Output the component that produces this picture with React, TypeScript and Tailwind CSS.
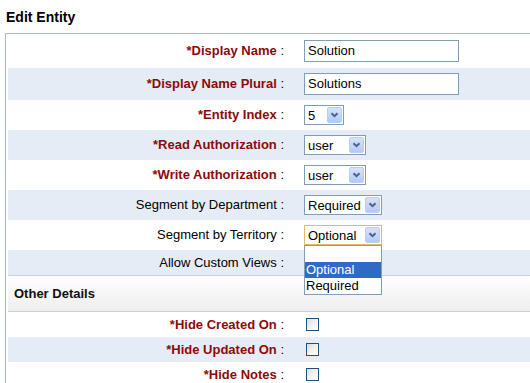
import React from 'react';

type Field =
  | { kind: 'text'; value: string }
  | { kind: 'select'; value: string; width: string; focused?: boolean; open?: boolean }
  | { kind: 'check' }
  | { kind: 'none' };

interface Row {
  label: string;
  required: boolean;
  height: string;
  field: Field;
}

const topRows: Row[] = [
  { label: 'Display Name', required: true, height: 'h-[34px]', field: { kind: 'text', value: 'Solution' } },
  { label: 'Display Name Plural', required: true, height: 'h-[32px]', field: { kind: 'text', value: 'Solutions' } },
  { label: 'Entity Index', required: true, height: 'h-[30px]', field: { kind: 'select', value: '5', width: 'w-[40px]' } },
  { label: 'Read Authorization', required: true, height: 'h-[30px]', field: { kind: 'select', value: 'user', width: 'w-[62px]' } },
  { label: 'Write Authorization', required: true, height: 'h-[30px]', field: { kind: 'select', value: 'user', width: 'w-[62px]' } },
  { label: 'Segment by Department', required: false, height: 'h-[30px]', field: { kind: 'select', value: 'Required', width: 'w-[78px]' } },
  {
    label: 'Segment by Territory',
    required: false,
    height: 'h-[30px]',
    field: { kind: 'select', value: 'Optional', width: 'w-[78px]', focused: true, open: true },
  },
  { label: 'Allow Custom Views', required: false, height: 'h-[25px]', field: { kind: 'none' } },
];

const otherRows: Row[] = [
  { label: 'Hide Created On', required: true, height: 'h-[25px]', field: { kind: 'check' } },
  { label: 'Hide Updated On', required: true, height: 'h-[25px]', field: { kind: 'check' } },
  { label: 'Hide Notes', required: true, height: 'h-[25px]', field: { kind: 'check' } },
];

function Chevron() {
  return (
    <svg width="9" height="6" viewBox="0 0 9 6">
      <path d="M1.5 1.2 L4.5 4.2 L7.5 1.2" fill="none" stroke="#4d6185" strokeWidth="2" />
    </svg>
  );
}

function SelectBox({ value, width, focused, open }: { value: string; width: string; focused?: boolean; open?: boolean }) {
  return (
    <div className="relative">
      <div
        className={`${width} h-[20px] flex items-center justify-between border bg-white pl-[3px] pr-[1px] ${
          focused ? 'border-[#e2bb6a]' : 'border-[#7f9db9]'
        }`}
      >
        <span className="text-[13px] leading-none text-black">{value}</span>
        <span className="w-[15px] h-[16px] flex items-center justify-center rounded-[2px] border border-[#bccdf4] bg-gradient-to-b from-[#d6e3fd] to-[#b3c9f7]">
          <Chevron />
        </span>
      </div>
      {open && (
        <div className={`absolute left-0 top-[20px] z-10 ${width} border border-[#7f9db9] bg-white text-[13px] leading-[16px] text-black`}>
          <div className="h-[16px]" />
          <div className="h-[16px] bg-[#316ac5] text-white pl-[1px]">Optional</div>
          <div className="h-[16px] pl-[1px]">Required</div>
        </div>
      )}
    </div>
  );
}

function FieldCell({ field }: { field: Field }) {
  if (field.kind === 'text') {
    return (
      <div className="w-[155px] h-[22px] flex items-center border border-[#7f9db9] bg-white pl-[3px] text-[13px] text-black">
        {field.value}
      </div>
    );
  }
  if (field.kind === 'select') {
    return <SelectBox value={field.value} width={field.width} focused={field.focused} open={field.open} />;
  }
  if (field.kind === 'check') {
    return (
      <div className="ml-[2px] w-[13px] h-[13px] border border-[#1c5180] bg-gradient-to-br from-[#dcdcd7] via-[#f2f2ef] to-white" />
    );
  }
  return null;
}

function FormRow({ row, index }: { row: Row; index: number }) {
  return (
    <div className={`flex items-center ${row.height} ${index % 2 === 1 ? 'bg-[#e5ecf6]' : 'bg-white'}`}>
      <div className="w-[276px] text-right text-[13px] whitespace-nowrap">
        {row.required ? (
          <span className="font-bold text-[#8b0a0a]">*{row.label}</span>
        ) : (
          <span className="text-black">{row.label}</span>
        )}
        <span className="text-black"> :</span>
      </div>
      <div className="ml-[20px]">
        <FieldCell field={row.field} />
      </div>
    </div>
  );
}

export default function App() {
  return (
    <div className="w-[530px] h-[383px] overflow-hidden bg-white font-['Liberation_Sans',Arial,sans-serif]">
      <div className="h-[33px] pl-[6px] pt-[9px] text-[14px] leading-[17px] font-bold text-black">Edit Entity</div>
      <div className="ml-[5px] border-l border-t border-[#a9b9c9] pl-[2px]">
        {topRows.map((row, i) => (
          <FormRow key={row.label} row={row} index={i} />
        ))}
        <div className="h-[37px] flex items-center pl-[6px] border-t border-b border-[#c8d0d8] bg-gradient-to-b from-white to-[#eeeeee] text-[13px] font-bold text-[#111]">
          Other Details
        </div>
        {otherRows.map((row, i) => (
          <FormRow key={row.label} row={row} index={i} />
        ))}
      </div>
    </div>
  );
}
